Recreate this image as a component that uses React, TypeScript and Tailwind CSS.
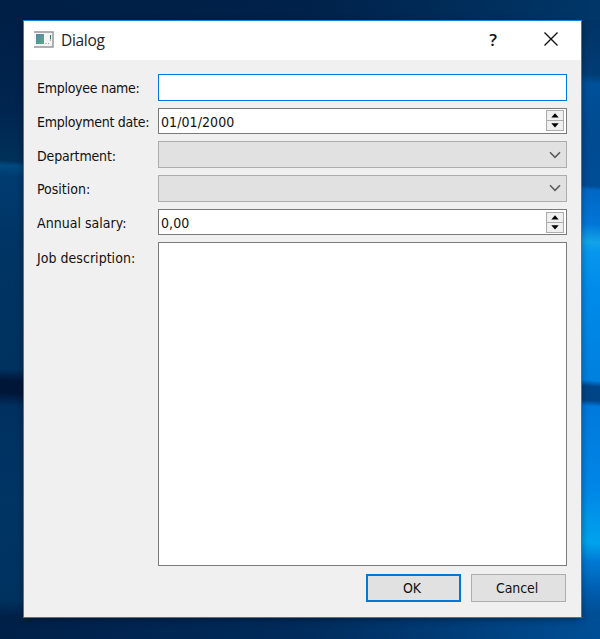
import type { ReactNode } from "react";

function Wallpaper() {
  return (
    <div className="absolute inset-0 flex flex-col overflow-hidden">
      <div className="h-[20px] bg-linear-to-r from-[#001f47] via-[#002149] to-[#003769]" />
      <div className="flex flex-1 justify-between">
        <div className="w-[40px] bg-[linear-gradient(183deg,#001f47_0px,#00254f_90px,#003059_142px,#014a80_147px,#003b70_158px,#003463_240px,#00325f_350px,#001638_362px,#001638_374px,#003060_387px,#003564_480px,#003260_580px,#002047_598px)]" />
        <div className="w-[40px] bg-[linear-gradient(184deg,#003365_0px,#003d75_55px,#00509a_64px,#004b91_110px,#004c96_166px,#0067c4_170px,#0076d8_204px,#12a4e8_222px,#0796ee_232px,#008bea_270px,#0080df_360px,#004588_366px,#004485_380px,#0079dc_386px,#0087e7_470px,#00a3ed_522px,#007ad5_540px,#0059a8_575px,#004b8f_598px)]" />
      </div>
      <div className="h-[21px] bg-linear-to-r from-[#002048] via-[#002b5b] to-[#004f96]" />
    </div>
  );
}

function TitleBar() {
  return (
    <div className="flex h-[39px] shrink-0 items-center bg-white pb-[2px] pl-[10px]">
      <svg width="20" height="17" viewBox="0 0 20 17" className="-mt-[1px] shrink-0">
        <path d="M0 1h19v15H0" fill="#f4f4f4" stroke="#94979b" strokeWidth="1.5" />
        <defs>
          <linearGradient id="pane" x1="0" y1="0" x2="1" y2="1">
            <stop offset="0" stopColor="#5783a5" />
            <stop offset="1" stopColor="#58ad83" />
          </linearGradient>
        </defs>
        <rect x="2" y="3" width="8" height="10" fill="url(#pane)" />
        <path d="M11.5 12.5h1M14 12.5h1" stroke="#999" />
        <path d="M16.5 4v4" stroke="#397565" />
        <path d="M16.5 8v2" stroke="#aaa" />
      </svg>
      <span className="ml-[7px] font-['Open_Sans','Noto_Sans',sans-serif] text-[15.5px] leading-5 tracking-[-0.3px] text-[#222]">
        Dialog
      </span>
      <button type="button" className="mr-[47px] ml-auto font-['Open_Sans',sans-serif] text-[17px] leading-5 font-semibold text-[#111]">
        ?
      </button>
      <button type="button" className="mr-[23px] -mt-px">
        <svg width="14" height="14" viewBox="0 0 14 14">
          <path d="M0.5 0.5l13 13M13.5 0.5l-13 13" stroke="#111" strokeWidth="1.4" />
        </svg>
      </button>
    </div>
  );
}

interface RowProps {
  label: string;
  labelClass?: string;
  children: ReactNode;
}

function Row({ label, labelClass = "tracking-[-0.27px]", children }: RowProps) {
  return (
    <div className="flex h-[26.5px] items-center">
      <span className={`w-[121px] shrink-0 pt-[2px] whitespace-nowrap ${labelClass}`}>{label}</span>
      {children}
    </div>
  );
}

function SpinBox({ value }: { value: string }) {
  return (
    <div className="flex h-full flex-1 items-center justify-between border border-[#7a7a7a] bg-white pr-[2px] pl-[2px]">
      <span className="pt-[2px] tracking-[0.08px]">{value}</span>
      <div className="flex h-[21px] w-[18px] flex-col border border-[#acacac] bg-[#f0f0f0]">
        <span className="flex flex-1 items-center justify-center border-b border-[#acacac]">
          <svg width="8" height="5" viewBox="0 0 8 5">
            <path d="M4 0.2L7.7 4.5H0.3z" />
          </svg>
        </span>
        <span className="flex flex-1 items-center justify-center">
          <svg width="8" height="5" viewBox="0 0 8 5">
            <path d="M0.3 0.3h7.4L4 4.6z" />
          </svg>
        </span>
      </div>
    </div>
  );
}

function ComboBox() {
  return (
    <div className="flex h-full flex-1 items-center justify-end border border-[#adadad] bg-[#e1e1e1] pr-[5px]">
      <svg width="12" height="8" viewBox="0 0 12 8" fill="none">
        <path d="M1 1.3l5 5 5-5" stroke="#5b5b5b" strokeWidth="1.6" />
      </svg>
    </div>
  );
}

export default function App() {
  return (
    <div className="relative h-[639px] w-[600px] overflow-hidden bg-[#002149] pt-[20px] pl-[23px]">
      <Wallpaper />
      <div className="relative flex h-[598px] w-[559px] flex-col border border-[#1883d7] bg-[#f0f0f0] shadow-[0_2px_7px_rgba(0,0,0,0.35)]">
        <TitleBar />
        <div className="flex flex-1 flex-col pt-[14px] pr-[14px] pb-[15px] pl-[13px] font-['DejaVu_Sans_Condensed','DejaVu_Sans',sans-serif] text-[14px] leading-5 tracking-[-0.25px] text-[#111] [font-stretch:condensed]">
          <div className="flex flex-col gap-[7.2px]">
            <Row label="Employee name:">
              <input className="h-full min-w-0 flex-1 border border-[#0078d7] bg-white px-1 outline-none" />
            </Row>
            <Row label="Employment date:">
              <SpinBox value="01/01/2000" />
            </Row>
            <Row label="Department:" labelClass="tracking-[-0.15px]">
              <ComboBox />
            </Row>
            <Row label="Position:" labelClass="tracking-[0px]">
              <ComboBox />
            </Row>
            <Row label="Annual salary:" labelClass="tracking-[0.03px]">
              <SpinBox value="0,00" />
            </Row>
          </div>
          <div className="mt-[7px] flex flex-1">
            <span className="w-[121px] shrink-0 pt-[6px] tracking-[0.03px] whitespace-nowrap">Job description:</span>
            <textarea className="min-w-0 flex-1 resize-none border border-[#7a7a7a] bg-white outline-none" />
          </div>
          <div className="mt-[8px] flex justify-end gap-[10px] pr-px">
            <button type="button" className="h-[28px] w-[95px] border-2 border-[#0078d7] bg-[#e1e1e1] pr-[3px] tracking-[0px]">
              OK
            </button>
            <button type="button" className="h-[28px] w-[95px] border border-[#adadad] bg-[#e1e1e1] pr-[3px] tracking-[-0.1px]">
              Cancel
            </button>
          </div>
        </div>
      </div>
    </div>
  );
}
